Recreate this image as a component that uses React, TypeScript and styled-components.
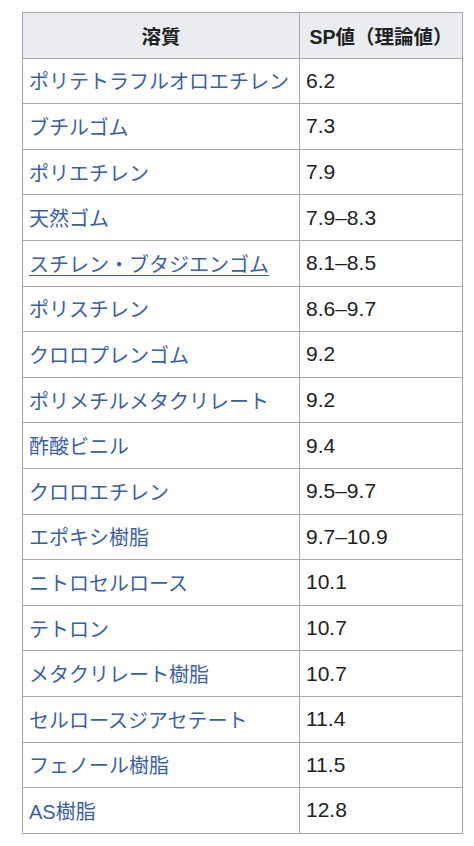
import React from 'react';
import styled, { createGlobalStyle } from 'styled-components';

const GlobalStyle = createGlobalStyle`
  html, body {
    margin: 0;
    padding: 0;
    background: #ffffff;
  }
  body {
    font-family: "Liberation Sans", "Noto Sans CJK JP", sans-serif;
  }
`;

const Page = styled.div`
  padding: 12px 0 0 22px;
`;

const Table = styled.table`
  border-collapse: collapse;
  table-layout: fixed;
  width: 440px;
  color: #202122;
`;

const HeadCell = styled.th<{ $width: number }>`
  width: ${(p) => p.$width}px;
  height: 45.6px;
  padding: 0 4px;
  box-sizing: border-box;
  background: #eaecf0;
  border: 1px solid #a2a9b1;
  font-size: 19.5px;
  font-weight: 700;
  text-align: center;
  white-space: nowrap;
  color: #202122;
`;

const Row = styled.tr`
  height: 45.6px;
`;

const Cell = styled.td<{ $numeric?: boolean }>`
  padding: 0 6px;
  border: 1px solid #a2a9b1;
  font-size: ${(p) => (p.$numeric ? '21px' : '20px')};
  white-space: nowrap;
  vertical-align: middle;
`;

const Link = styled.a<{ $underline?: boolean }>`
  color: #3a5fa8;
  text-decoration: ${(p) => (p.$underline ? 'underline' : 'none')};
  text-underline-offset: 3px;
  text-decoration-thickness: 1px;
`;

const rows: { name: string; value: string; underline?: boolean }[] = [
  { name: 'ポリテトラフルオロエチレン', value: '6.2' },
  { name: 'ブチルゴム', value: '7.3' },
  { name: 'ポリエチレン', value: '7.9' },
  { name: '天然ゴム', value: '7.9–8.3' },
  { name: 'スチレン・ブタジエンゴム', value: '8.1–8.5', underline: true },
  { name: 'ポリスチレン', value: '8.6–9.7' },
  { name: 'クロロプレンゴム', value: '9.2' },
  { name: 'ポリメチルメタクリレート', value: '9.2' },
  { name: '酢酸ビニル', value: '9.4' },
  { name: 'クロロエチレン', value: '9.5–9.7' },
  { name: 'エポキシ樹脂', value: '9.7–10.9' },
  { name: 'ニトロセルロース', value: '10.1' },
  { name: 'テトロン', value: '10.7' },
  { name: 'メタクリレート樹脂', value: '10.7' },
  { name: 'セルロースジアセテート', value: '11.4' },
  { name: 'フェノール樹脂', value: '11.5' },
  { name: 'AS樹脂', value: '12.8' },
];

export default function App() {
  return (
    <Page>
      <GlobalStyle />
      <Table>
        <thead>
          <Row>
            <HeadCell $width={277}>溶質</HeadCell>
            <HeadCell $width={163}>SP値（理論値）</HeadCell>
          </Row>
        </thead>
        <tbody>
          {rows.map((r) => (
            <Row key={r.name}>
              <Cell>
                <Link href="#" $underline={r.underline}>{r.name}</Link>
              </Cell>
              <Cell $numeric>{r.value}</Cell>
            </Row>
          ))}
        </tbody>
      </Table>
    </Page>
  );
}
